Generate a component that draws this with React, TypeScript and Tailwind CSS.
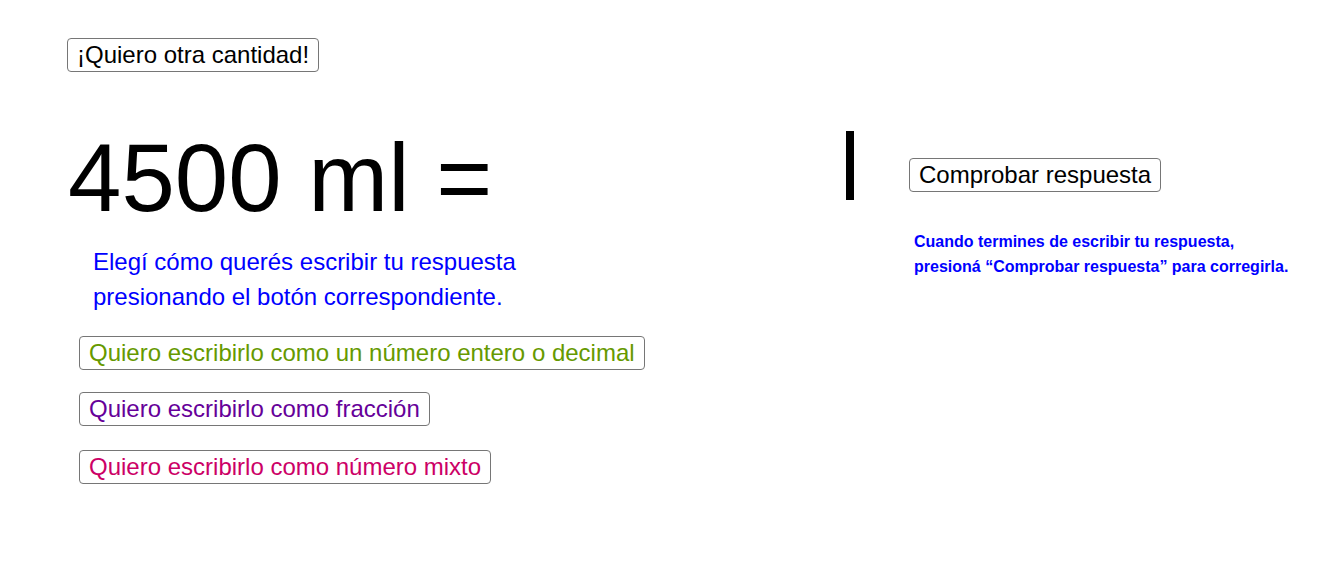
const font = "font-['Liberation_Sans',Arial,sans-serif]";

const Btn = ({ label, color, className = "" }: { label: string; color: string; className?: string }) => (
  <button
    className={`h-[34px] px-[9px] flex items-center border border-[#767676] rounded-[4px] bg-white text-[24px] leading-none whitespace-nowrap ${color} ${className}`}
  >
    {label}
  </button>
);

const App = () => {
  return (
    <div className={`w-[1341px] h-[562px] bg-white overflow-hidden pl-[67px] pt-[38px] ${font}`}>
      <Btn label="¡Quiero otra cantidad!" color="text-black" />

      <div className="flex mt-[58px]">
        <div className="w-[779px] flex flex-col items-start">
          <div className="ml-[1px] text-[96px] leading-none text-black whitespace-nowrap">4500 ml =</div>
          <p className="mt-[18px] ml-[26px] text-[24px] leading-[35px] text-[#0000ff]">
            Elegí cómo querés escribir tu respuesta
            <br />
            presionando el botón correspondiente.
          </p>
          <Btn
            label="Quiero escribirlo como un número entero o decimal"
            color="text-[#669900]"
            className="mt-[22px] ml-[12px]"
          />
          <Btn
            label="Quiero escribirlo como fracción"
            color="text-[#660099]"
            className="mt-[22px] ml-[12px]"
          />
          <Btn
            label="Quiero escribirlo como número mixto"
            color="text-[#cc0066]"
            className="mt-[24px] ml-[12px]"
          />
        </div>

        <div className="w-[8px] h-[69px] mt-[1px] bg-black" />

        <div className="ml-[55px] flex flex-col items-start">
          <Btn label="Comprobar respuesta" color="text-black" className="mt-[28px]" />
          <p className="mt-[37px] ml-[5px] text-[16px] leading-[25px] font-bold text-[#0000ff] whitespace-nowrap">
            Cuando termines de escribir tu respuesta,
            <br />
            presioná “Comprobar respuesta” para corregirla.
          </p>
        </div>
      </div>
    </div>
  );
};

export default App;
